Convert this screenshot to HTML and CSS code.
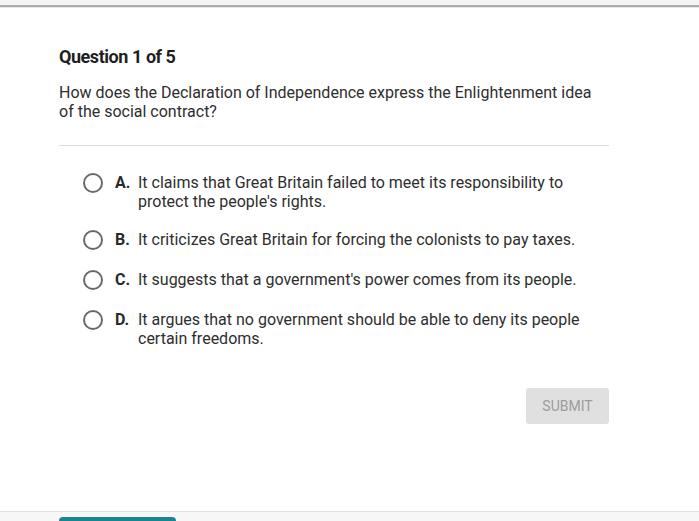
FILE: index.html
```html
<!DOCTYPE html>
<html>
<head>
<meta charset="utf-8">
<link rel="stylesheet" href="styles.css">
</head>
<body>
<div class="page">
  <div class="topbar"></div>
  <main class="quiz">
    <h1 class="title">Question 1 of 5</h1>
    <p class="prompt">How does the Declaration of Independence express the Enlightenment idea of the social contract?</p>
    <hr class="rule">
    <ul class="options">
      <li class="option"><span class="radio"></span><span class="letter">A.</span><span class="text">It claims that Great Britain failed to meet its responsibility to protect the people's rights.</span></li>
      <li class="option"><span class="radio"></span><span class="letter">B.</span><span class="text">It criticizes Great Britain for forcing the colonists to pay taxes.</span></li>
      <li class="option"><span class="radio"></span><span class="letter">C.</span><span class="text">It suggests that a government's power comes from its people.</span></li>
      <li class="option"><span class="radio"></span><span class="letter">D.</span><span class="text">It argues that no government should be able to deny its people certain freedoms.</span></li>
    </ul>
    <div class="actions"><button class="submit">SUBMIT</button></div>
  </main>
  <footer class="footer"><div class="tab"></div></footer>
</div>
</body>
</html>
```
FILE: styles.css
```css
html, body { margin: 0; padding: 0; background: #fff; }
body { font-family: Roboto, "Noto Sans", sans-serif; color: #333; }
.page { height: 521px; display: flex; flex-direction: column; overflow: hidden; }
.topbar { height: 5px; background: #f4f4f4; border-bottom: 2px solid #ababab; box-shadow: 0 1px 0 #e6e6e6; flex: none; }
.quiz { flex: 1; padding: 40px 0 0 59px; width: 550px; }
.title { margin: 0; font-size: 18px; line-height: 20px; font-weight: 700; letter-spacing: -0.45px; color: #1f1f1f; }
.prompt { margin: 16px 0 0; font-size: 16px; line-height: 19px; color: #2e2e2e; }
.rule { margin: 24px 0 0; border: 0; border-top: 1px solid #dcdcdc; height: 0; }
.options { list-style: none; margin: 27px 0 0; padding: 0 0 0 24px; display: flex; flex-direction: column; gap: 20px; }
.option { display: flex; align-items: flex-start; font-size: 16px; line-height: 19px; color: #2e2e2e; }
.option:first-child { margin-bottom: -1px; }
.radio { width: 16px; height: 16px; border: 2px solid #6a6a6a; border-radius: 50%; flex: none; margin-right: 12px; }
.letter { font-weight: 700; width: 23px; flex: none; color: #2a2a2a; }
.text { flex: 1; }
.actions { display: flex; justify-content: flex-end; margin-top: 40px; }
.submit { width: 83px; height: 36px; border: 0; border-radius: 3px; background: #e0e0e0; color: #9c9c9c; font-family: Roboto, sans-serif; font-size: 14px; padding: 0; }
.footer { height: 9px; flex: none; background: #f7f7f7; border-top: 1px solid #e2e2e2; padding-left: 59px; display: flex; align-items: flex-end; }
.tab { width: 117px; height: 4px; background: #1a8494; border-radius: 4px 4px 0 0; }
```
